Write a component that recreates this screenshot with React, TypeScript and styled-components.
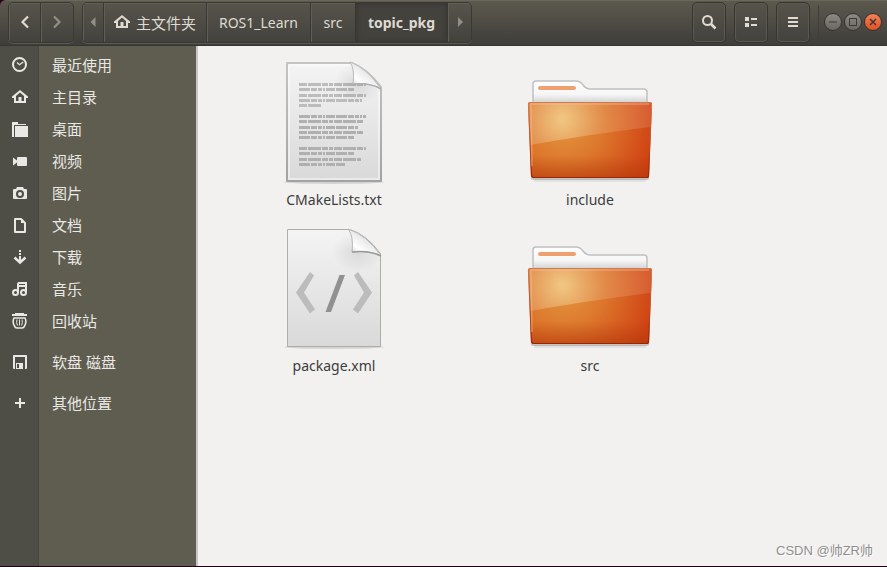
import React from "react";
import styled, { createGlobalStyle, css } from "styled-components";

const GlobalStyle = createGlobalStyle`
  *, *::before, *::after { box-sizing: border-box; }
  body {
    margin: 0;
    background: #2c001e;
    font-family: "Noto Sans", "Noto Sans CJK SC", sans-serif;
    font-size: 14px;
  }
  button { font: inherit; color: inherit; padding: 0; cursor: pointer; }
`;

const Window = styled.div`
  display: flex;
  flex-direction: column;
  min-height: 100vh;
  border-bottom: 1px solid #1c0414;
`;

const HeaderBar = styled.header`
  display: flex;
  align-items: center;
  height: 46px;
  padding: 0 5px 2px 8px;
  color: #dfdbd2;
  background: linear-gradient(#5c594e, #3e3d39);
  border-top: 1px solid #6a6759;
  border-bottom: 1px solid #373632;
  border-top-left-radius: 6px;
`;

const ButtonGroup = styled.div`
  display: flex;
  height: 41px;
  border: 1px solid #3a3935;
  border-radius: 5px;
  overflow: hidden;
  background: linear-gradient(#57544b, #43423d);
  box-shadow: 0 1px #5a584f;
`;

const HistoryGroup = styled(ButtonGroup)`
  margin-right: 8px;
`;

const BarButton = styled.button<{ $width?: number; $active?: boolean; $dim?: boolean }>`
  display: flex;
  align-items: center;
  justify-content: center;
  gap: 6px;
  flex: none;
  width: ${(p) => (p.$width ? `${p.$width}px` : "auto")};
  border: 0;
  border-left: 1px solid #393834;
  background: transparent;
  box-shadow: inset 1px 1px #615f55;
  white-space: nowrap;
  &:first-child { border-left: 0; }
  ${(p) => p.$dim && css`color: #918e86;`}
  ${(p) =>
    p.$active &&
    css`
      font-weight: 700;
      background: #44423d;
      box-shadow: inset 0 0 5px #32312e;
    `}
`;

const HomeLabel = styled.span`
  font-size: 15px;
`;

const Spacer = styled.div`
  flex: 1;
`;

const ToolButton = styled.button`
  display: flex;
  align-items: center;
  justify-content: center;
  flex: none;
  width: 34px;
  height: 41px;
  margin-right: 8px;
  border: 1px solid #363531;
  border-radius: 5px;
  background: linear-gradient(#56534a, #43423d);
  box-shadow: inset 0 0 0 1px #5b594f;
`;

const WindowControls = styled.div`
  display: flex;
  gap: 2px;
  padding-left: 5px;
  border-left: 1px solid #3f3e39;
  height: 34px;
  align-items: center;
`;

const ControlButton = styled.button<{ $close?: boolean }>`
  display: grid;
  place-items: center;
  width: 18px;
  height: 18px;
  border: 1px solid #34332f;
  border-radius: 50%;
  color: #3a3935;
  background: ${(p) => (p.$close ? "linear-gradient(#f5805a, #e2511e)" : "linear-gradient(#8b8982, #6a6861)")};
`;

const Body = styled.div`
  display: flex;
  flex: 1;
`;

const Sidebar = styled.nav`
  flex: none;
  width: 198px;
  padding-top: 3px;
  border-right: 2px solid #c8c6c4;
  background: linear-gradient(to right, #4f4e46 38px, #474640 38px, #474640 39px, #5f5d50 39px);
`;

const PlaceList = styled.ul`
  list-style: none;
  margin: 0 0 9px;
  padding: 0;
`;

const Place = styled.button`
  display: grid;
  grid-template-columns: 16px 1fr;
  column-gap: 24px;
  align-items: center;
  width: 100%;
  height: 32px;
  padding-left: 12px;
  border: 0;
  background: transparent;
  color: #e9e8e4;
  font-size: 15px;
  text-align: left;
`;

const PlaceLabel = styled.span`
  padding-bottom: 2px;
`;

const Content = styled.main`
  position: relative;
  flex: 1;
  min-width: 0;
  padding: 12px 0 12px 8px;
  background: #f2f1f0;
`;

const FileGrid = styled.div`
  display: grid;
  grid-template-columns: repeat(auto-fill, 256px);
  row-gap: 12px;
`;

const FileItem = styled.button`
  display: flex;
  flex-direction: column;
  align-items: center;
  gap: 4px;
  height: 154px;
  border: 0;
  background: transparent;
  color: #3c3c3c;
  line-height: 20px;
`;

const Watermark = styled.span`
  position: absolute;
  right: 14px;
  bottom: 6px;
  color: #8f8e8d;
  font-family: "Liberation Sans", "Noto Sans CJK SC", sans-serif;
  font-size: 13px;
  line-height: 18px;
  text-shadow: 1px 1px #ffffff;
`;

const Glyph = ({ children, size = 16 }: { children: React.ReactNode; size?: number }) => (
  <svg width={size} height={size} viewBox="0 0 16 16" fill="currentColor" aria-hidden="true">
    {children}
  </svg>
);

const HomeGlyph = () => (
  <Glyph>
    <path d="M8 1 0 7.500V9h2v5h12V9h2V7.500ZM8 3.600l4 3.400v5H9.500V8h-3v4H4V7Z" fillRule="evenodd" />
  </Glyph>
);

const glyphs: Record<string, React.ReactNode> = {
  recent: (
    <Glyph>
      <circle cx="7.500" cy="7.500" r="6.500" fill="none" stroke="currentColor" strokeWidth="2" />
      <path d="m5 5.500 2.500 2.300L11.300 5" fill="none" stroke="currentColor" strokeWidth="1.200" />
    </Glyph>
  ),
  home: <HomeGlyph />,
  desktop: (
    <Glyph>
      <path d="M0 1h6v2h8v1H2v12H0ZM3 5h13v11H3Z" />
    </Glyph>
  ),
  video: (
    <Glyph>
      <path d="M1 4.500 5 7.500V5q0-1 1-1h8q1 0 1 1v7q0 1-1 1H6q-1 0-1-1v-2.500l-4 3Z" />
    </Glyph>
  ),
  pictures: (
    <Glyph>
      <path d="M5 2h6l1 2h2q1 0 1 1v8q0 1-1 1H2q-1 0-1-1V5q0-1 1-1h2Zm3 3a4 4 0 1 0 0 8 4 4 0 0 0 0-8Zm0 2a2 2 0 1 1 0 4 2 2 0 0 1 0-4Z" fillRule="evenodd" />
    </Glyph>
  ),
  documents: (
    <Glyph>
      <path d="M3 2h6l4 4v9H3Z" fill="none" stroke="currentColor" strokeWidth="2" strokeLinejoin="round" />
      <path d="M9 2v4h4Z" />
    </Glyph>
  ),
  downloads: (
    <Glyph>
      <path d="M7 1h2v2H7ZM7 4h2v2H7ZM7 7h2v5H7Z" />
      <path d="m2.500 8.500 5.500 5 5.500-5" fill="none" stroke="currentColor" strokeWidth="2.500" />
    </Glyph>
  ),
  music: (
    <Glyph>
      <path d="M6 12V3q0-1 1-1h7v9M6 5h8" fill="none" stroke="currentColor" strokeWidth="2" />
      <circle cx="3.500" cy="11.500" r="2.500" fill="none" stroke="currentColor" strokeWidth="2" />
      <circle cx="11.500" cy="11.500" r="2.500" fill="none" stroke="currentColor" strokeWidth="2" />
    </Glyph>
  ),
  trash: (
    <Glyph>
      <path d="M3 0h9v1h3v2H0V1h3Z" />
      <path d="M2 5q-2 4 .5 8 .5 2 2.500 2h5q2 0 2.500-2 2.500-4 .5-8Z" fill="none" stroke="currentColor" strokeWidth="1.600" />
      <path d="M5 6.500q-1 3 .5 6M7.500 6.500v6M10 6.500q1 3-.5 6" fill="none" stroke="currentColor" />
    </Glyph>
  ),
  floppy: (
    <Glyph>
      <path d="M3 14H2V2h12v12h-1" fill="none" stroke="currentColor" strokeWidth="2" strokeLinejoin="round" />
      <path d="M4 9h7v6H4Zm1 1v4h2v-4Z" fillRule="evenodd" />
    </Glyph>
  ),
  plus: (
    <Glyph>
      <path d="M7 3h2v4h4v2H9v4H7V9H3V7h4Z" />
    </Glyph>
  ),
};

const lineRows: Array<[number, number]> = [
  [26, 96], [31, 85], [37, 96], [42, 93], [47, 51],
  [58, 96], [63, 93], [69, 88], [74, 93], [79, 85],
  [90, 96], [95, 85], [101, 91], [106, 75],
];

const TextFileArt = () => (
  <svg width="128" height="128" viewBox="0 0 128 128" aria-hidden="true">
    <defs>
      <linearGradient id="txtPaper" x2="0" y2="1">
        <stop stopColor="#f4f4f4" />
        <stop offset="1" stopColor="#d9d9d9" />
      </linearGradient>
      <linearGradient id="txtEdge" x2="0" y2="1">
        <stop stopColor="#c4c4c4" />
        <stop offset="1" stopColor="#a3a3a3" />
      </linearGradient>
      <linearGradient id="curl" x1="0.050" y1="0.900" x2="0.550" y2="0.350">
        <stop stopColor="#c9c9c9" />
        <stop offset="0.400" stopColor="#ffffff" />
        <stop offset="1" stopColor="#e6e6e6" />
      </linearGradient>
      <radialGradient id="curlShade">
        <stop stopColor="#000" stopOpacity="0.090" />
        <stop offset="1" stopColor="#000" stopOpacity="0" />
      </radialGradient>
      <clipPath id="txtClip">
        <path d="M17 5h65q14 3 29 25v93H17Z" />
      </clipPath>
    </defs>
    <ellipse cx="64" cy="124" rx="50" ry="2" fill="#000" opacity="0.120" />
    <path d="M17 5h65q14 5 29 24v94H17Z" fill="url(#txtPaper)" stroke="url(#txtEdge)" strokeWidth="2" strokeLinejoin="round" />
    <path d="M19 7h62M19 7v114h90V33" fill="none" stroke="#fff" strokeWidth="1.500" opacity="0.600" />
    {lineRows.map(([y, end], i) => (
      <path
        key={y}
        d={`M29 ${y + 0.5}H${end}`}
        stroke={y < 55 ? "#bcbcbc" : "#b0b0b0"}
        strokeWidth="3"
        strokeDasharray={i % 2 ? "11 1 6 1 4 1 2 1 9 1" : "8 1 13 1 6 1 4 1"}
      />
    ))}
    <ellipse cx="88" cy="26" rx="24" ry="20" fill="url(#curlShade)" clipPath="url(#txtClip)" />
    <path d="M80 4q5 7 3 22 18-1 28 5Q97 10 80 4Z" fill="url(#curl)" stroke="#bbbbbb" />
    <path d="M83 26q17-2 28 5" fill="none" stroke="#ababab" strokeWidth="1.200" />
  </svg>
);

const XmlFileArt = () => (
  <svg width="128" height="128" viewBox="0 0 128 128" aria-hidden="true">
    <ellipse cx="64" cy="123" rx="50" ry="2" fill="#000" opacity="0.120" />
    <path d="M17.500 5.500H80q16 5 30.500 24v93h-93Z" fill="url(#txtPaper)" stroke="#adadad" />
    <ellipse cx="88" cy="28" rx="26" ry="20" fill="url(#curlShade)" clipPath="url(#txtClip)" />
    <path d="M78 5q6 7 4 23 17-2 29 4Q97 11 78 5Z" fill="url(#curl)" stroke="#b8b8b8" />
    <path d="M82 28q17-2 29 4" fill="none" stroke="#999" strokeWidth="1.500" />
    <path d="M40 48 26 68.500 40 89.500l5-4-11-17 10-17Z" fill="#bcbcbc" />
    <path d="m88 48 14 20.500L88 89.500l-5-4 11-17-10-17Z" fill="#bcbcbc" />
    <path d="M69.500 51H75L61 88h-5.500Z" fill="#919191" />
  </svg>
);

const FolderArt = ({ id }: { id: string }) => (
  <svg width="128" height="128" viewBox="0 0 128 128" aria-hidden="true">
    <defs>
      <linearGradient id={`${id}-back`} gradientUnits="userSpaceOnUse" x1="0" y1="22" x2="0" y2="46">
        <stop stopColor="#ffffff" />
        <stop offset="0.600" stopColor="#f6f6f6" />
        <stop offset="1" stopColor="#cdcdcd" />
      </linearGradient>
      <radialGradient id={`${id}-front`} gradientUnits="userSpaceOnUse" cx="38" cy="66" r="94">
        <stop stopColor="#e3963f" />
        <stop offset="0.450" stopColor="#dc752b" />
        <stop offset="1" stopColor="#cf3f12" />
      </radialGradient>
      <linearGradient id={`${id}-shade`} x2="0" y2="1">
        <stop offset="0.700" stopColor="#b43e0c" stopOpacity="0" />
        <stop offset="1" stopColor="#b03a0a" stopOpacity="0.550" />
      </linearGradient>
      <radialGradient id={`${id}-gloss`} gradientUnits="userSpaceOnUse" cx="36" cy="60" r="88">
        <stop stopColor="#f8e3a8" stopOpacity="0.650" />
        <stop offset="0.500" stopColor="#f0bd90" stopOpacity="0.280" />
        <stop offset="1" stopColor="#f0ad94" stopOpacity="0.220" />
      </radialGradient>
      <linearGradient id={`${id}-edge`} x2="0" y2="1">
        <stop stopColor="#d27850" />
        <stop offset="0.600" stopColor="#bc4a20" />
        <stop offset="1" stopColor="#9b2504" />
      </linearGradient>
    </defs>
    <rect x="5" y="119" width="118" height="3" rx="2" fill="#000" opacity="0.180" />
    <rect x="8" y="121" width="112" height="3" rx="1" fill="#000" opacity="0.060" />
    <path d="M7 60V26q0-3 3-3h40q4 0 7 4 3 4 7 4h54q3 0 3 3v26Z" fill={`url(#${id}-back)`} stroke="#c0c0c0" strokeWidth="1.500" />
    <rect x="12" y="28" width="38" height="4" rx="2" fill="#efa070" />
    <path d="M4 44h120q2 0 2 2l-3 72q0 2-2 2H8q-3 0-3-2L2 46q0-2 2-2Z" fill={`url(#${id}-front)`} />
    <path d="M4 44h120q2 0 2 2l-3 72q0 2-2 2H8q-3 0-3-2L2 46q0-2 2-2Z" fill={`url(#${id}-shade)`} />
    <path d="M3 45h122l-1 24Q60 77 4 87Z" fill={`url(#${id}-gloss)`} />
    <path d="M4.500 44.500h119q2 0 2 2l-3 71q0 2-2 2H8q-2 0-2.500-2l-3-71q0-2 2-2Z" fill="none" stroke={`url(#${id}-edge)`} strokeWidth="1.200" />
    <path d="M6 108 5 46h118" fill="none" stroke="#f6c49b" strokeWidth="1.500" opacity="0.450" />
  </svg>
);

const places = [
  { icon: "recent", label: "最近使用" },
  { icon: "home", label: "主目录" },
  { icon: "desktop", label: "桌面" },
  { icon: "video", label: "视频" },
  { icon: "pictures", label: "图片" },
  { icon: "documents", label: "文档" },
  { icon: "downloads", label: "下载" },
  { icon: "music", label: "音乐" },
  { icon: "trash", label: "回收站" },
];

const placeGroups = [
  places,
  [{ icon: "floppy", label: "软盘 磁盘" }],
  [{ icon: "plus", label: "其他位置" }],
];

const files = [
  { name: "CMakeLists.txt", art: <TextFileArt /> },
  { name: "include", art: <FolderArt id="include" /> },
  { name: "package.xml", art: <XmlFileArt /> },
  { name: "src", art: <FolderArt id="src" /> },
];

export default function App() {
  return (
    <>
      <GlobalStyle />
      <Window>
        <HeaderBar>
          <HistoryGroup>
            <BarButton $width={31} aria-label="Back">
              <Glyph>
                <path d="m11 2.500-5.500 5.500 5.500 5.500" fill="none" stroke="currentColor" strokeWidth="2.200" />
              </Glyph>
            </BarButton>
            <BarButton $width={33} $dim aria-label="Forward">
              <Glyph>
                <path d="m5 2.500 5.500 5.500-5.500 5.500" fill="none" stroke="currentColor" strokeWidth="2.200" />
              </Glyph>
            </BarButton>
          </HistoryGroup>
          <ButtonGroup>
            <BarButton $width={20} $dim aria-label="Scroll path left">
              <Glyph>
                <path d="m5.500 8 5-5v10Z" />
              </Glyph>
            </BarButton>
            <BarButton $width={103}>
              <HomeGlyph />
              <HomeLabel>主文件夹</HomeLabel>
            </BarButton>
            <BarButton $width={104}>ROS1_Learn</BarButton>
            <BarButton $width={45}>src</BarButton>
            <BarButton $width={92} $active>topic_pkg</BarButton>
            <BarButton $width={24} $dim aria-label="Scroll path right">
              <Glyph>
                <path d="m6 3 5 5-5 5Z" />
              </Glyph>
            </BarButton>
          </ButtonGroup>
          <Spacer />
          <ToolButton aria-label="Search">
            <Glyph>
              <circle cx="6.500" cy="6.500" r="4.500" fill="none" stroke="currentColor" strokeWidth="2" />
              <path d="m10 10 4.500 4.500" stroke="currentColor" strokeWidth="2.600" />
            </Glyph>
          </ToolButton>
          <ToolButton aria-label="List view">
            <Glyph>
              <path d="M2 3h4v4H2ZM2 9h4v4H2ZM8 4h6v2H8ZM8 10h6v2H8Z" />
            </Glyph>
          </ToolButton>
          <ToolButton aria-label="Menu">
            <Glyph>
              <path d="M3 3h10v2H3ZM3 7h10v2H3ZM3 11h10v2H3Z" />
            </Glyph>
          </ToolButton>
          <WindowControls>
            <ControlButton aria-label="Minimize">
              <Glyph>
                <path d="M4 7.500h8v1H4Z" />
              </Glyph>
            </ControlButton>
            <ControlButton aria-label="Maximize">
              <Glyph>
                <path d="M4.500 4.500h7v7h-7Z" fill="none" stroke="currentColor" />
              </Glyph>
            </ControlButton>
            <ControlButton $close aria-label="Close">
              <Glyph>
                <path d="m5 5 6 6m0-6-6 6" stroke="currentColor" strokeWidth="1.500" />
              </Glyph>
            </ControlButton>
          </WindowControls>
        </HeaderBar>
        <Body>
          <Sidebar aria-label="Places">
            {placeGroups.map((group) => (
              <PlaceList key={group[0].label}>
                {group.map((place) => (
                  <li key={place.label}>
                    <Place>
                      {glyphs[place.icon]}
                      <PlaceLabel>{place.label}</PlaceLabel>
                    </Place>
                  </li>
                ))}
              </PlaceList>
            ))}
          </Sidebar>
          <Content>
            <FileGrid>
              {files.map((file) => (
                <FileItem key={file.name}>
                  {file.art}
                  <span>{file.name}</span>
                </FileItem>
              ))}
            </FileGrid>
            <Watermark>CSDN @帅ZR帅</Watermark>
          </Content>
        </Body>
      </Window>
    </>
  );
}
